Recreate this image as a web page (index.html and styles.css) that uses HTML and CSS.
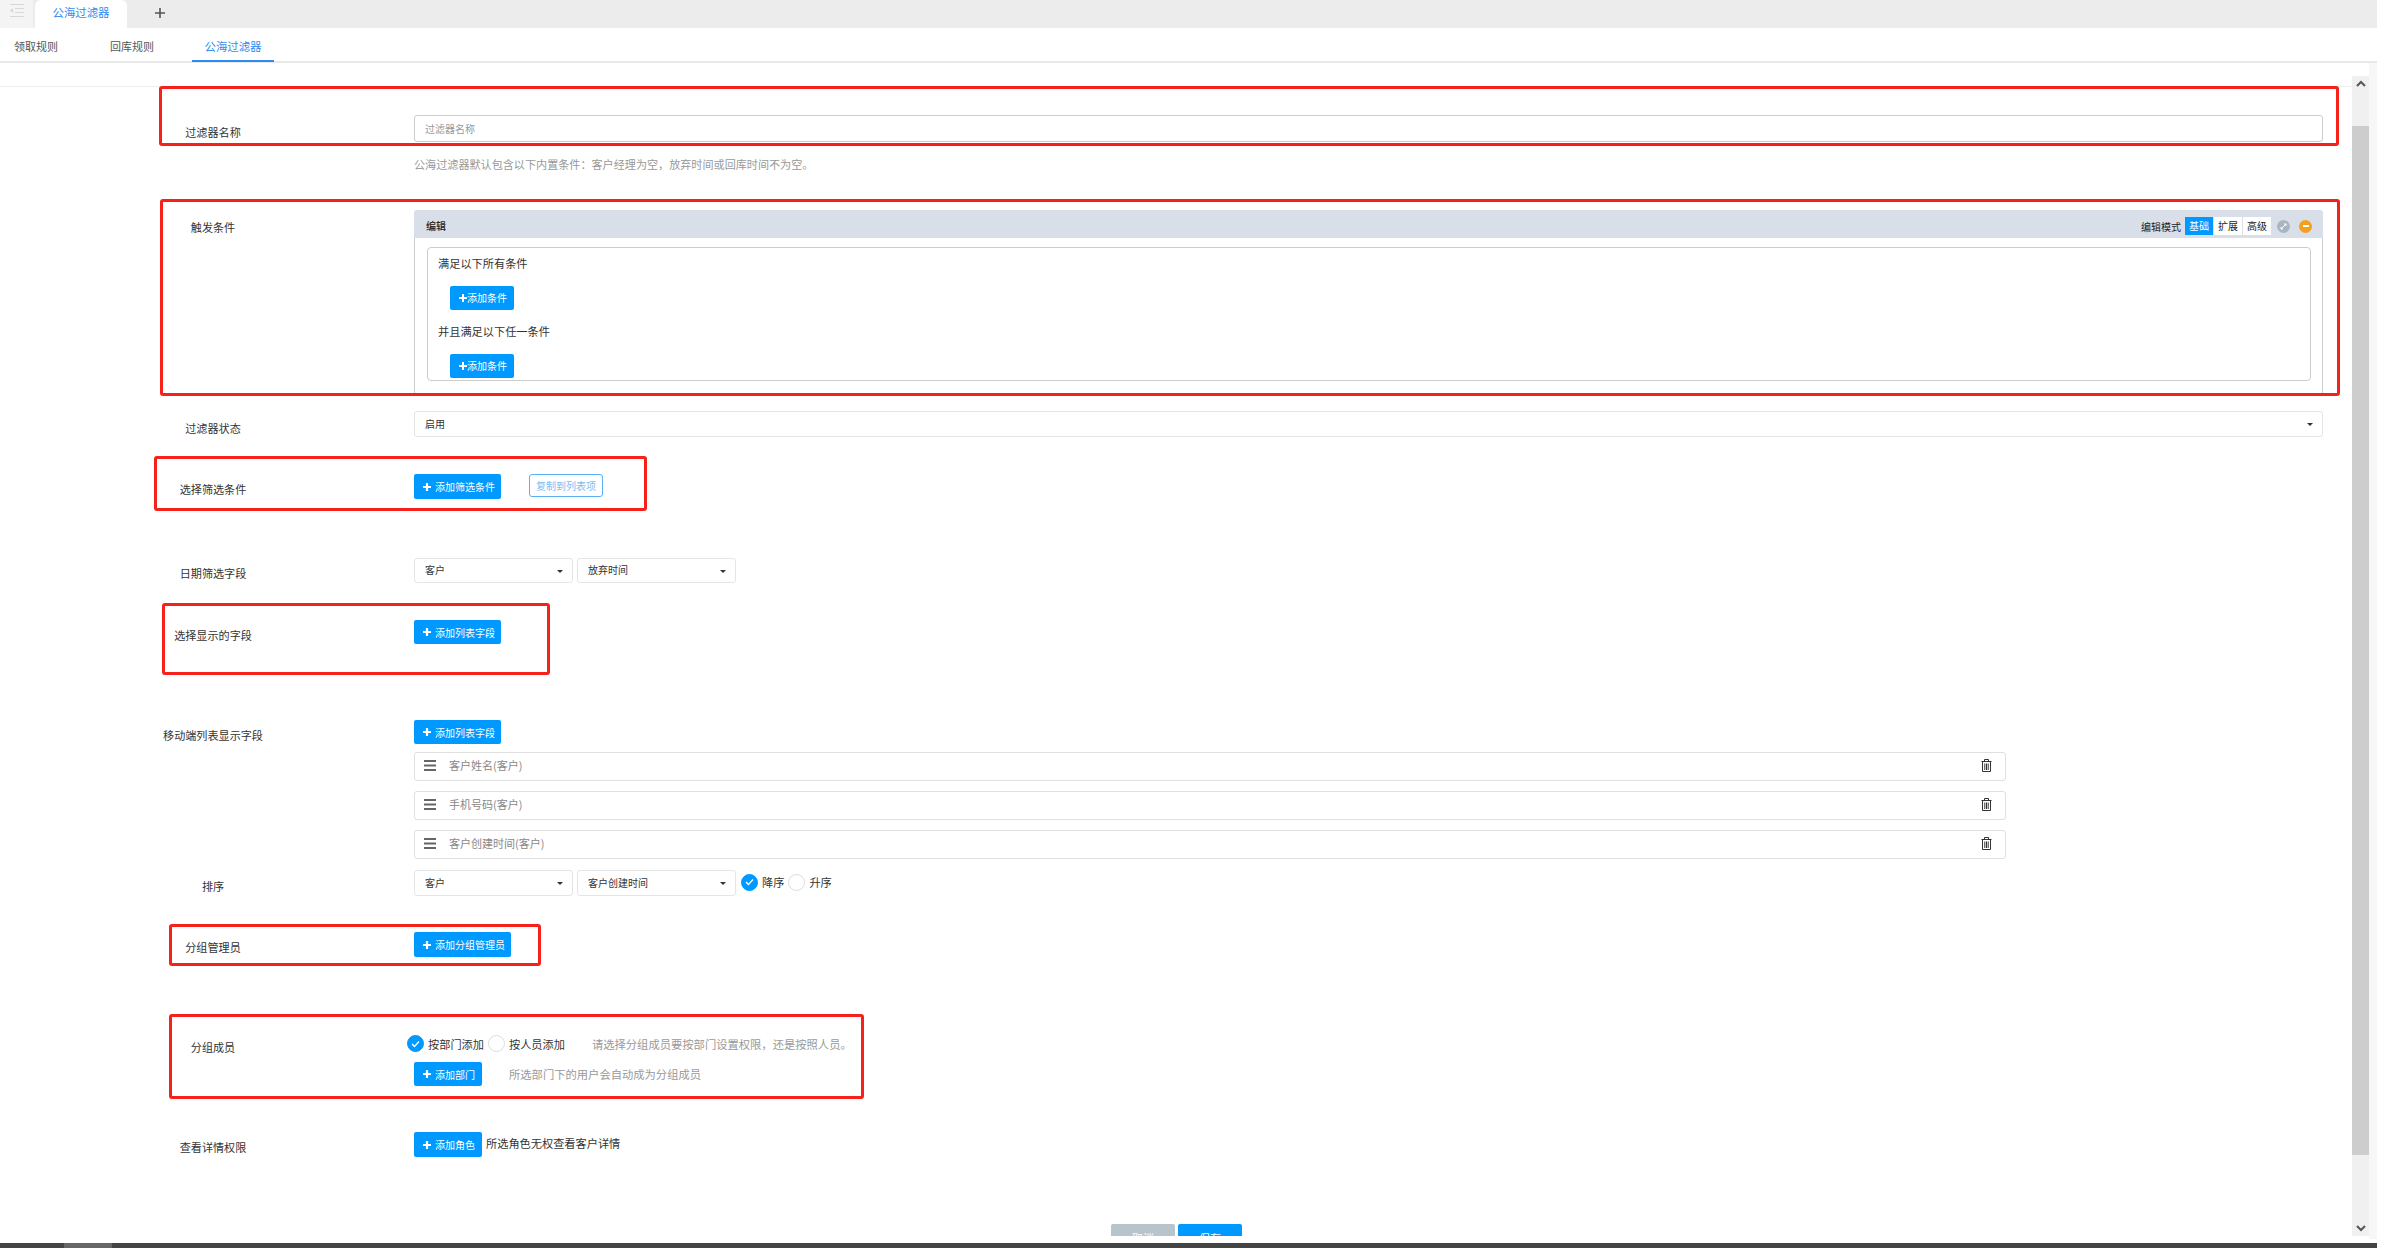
FILE: index.html
```html
<!DOCTYPE html>
<html lang="zh-CN">
<head>
<meta charset="utf-8">
<title>公海过滤器</title>
<link rel="stylesheet" href="styles.css">
</head>
<body>
<div class="app">
  <div class="topbar">
    <div class="menu-cell">
      <svg class="menu-icon" width="14" height="13" viewBox="0 0 14 13"><path d="M0 .5h14M5 4.500h9M5 8.500h9M0 12.500h14" stroke="#d8d8d8" fill="none"/><path d="M3 4v5L0 6.500z" fill="#d8d8d8"/></svg>
    </div>
    <div class="top-tab">公海过滤器</div>
    <div class="top-plus">
      <svg width="10" height="10" viewBox="0 0 10 10"><path d="M5 0v10M0 5h10" stroke="#555" stroke-width="1.600" fill="none"/></svg>
    </div>
  </div>
  <div class="subtabs">
    <div class="subtab">领取规则</div>
    <div class="subtab">回库规则</div>
    <div class="subtab subtab-active">公海过滤器</div>
  </div>
  <div class="main">
    <div class="scroller">
      <div class="form">
        <div class="row row-name">
          <div class="row-label low">过滤器名称</div>
          <div class="row-body">
            <div class="input"><span class="placeholder">过滤器名称</span></div>
            <div class="hint hint-name">公海过滤器默认包含以下内置条件：客户经理为空，放弃时间或回库时间不为空。</div>
          </div>
        </div>
        <div class="row row-trigger">
          <div class="row-label low">触发条件</div>
          <div class="row-body">
            <div class="panel">
              <div class="panel-head">
                <span class="panel-title">编辑</span>
                <div class="panel-tools">
                  <span class="mode-label">编辑模式</span>
                  <span class="mode mode-on">基础</span>
                  <span class="mode">扩展</span>
                  <span class="mode">高级</span>
                  <span class="round round-grey">
                    <svg width="7" height="7" viewBox="0 0 7 7"><path d="M1 6l5-5M4 1h2v2M1 4v2h2" stroke="#fff" fill="none"/></svg>
                  </span>
                  <span class="round round-orange"><span class="minus"></span></span>
                </div>
              </div>
              <div class="panel-body">
                <div class="rule-box">
                  <div class="rule-title">满足以下所有条件</div>
                  <button class="btn btn-cond"><svg class="plus-tight" width="8" height="8" viewBox="0 0 8 8"><path d="M4 0v8M0 4h8" stroke="#fff" stroke-width="2"/></svg>添加条件</button>
                  <div class="rule-title rule-second">并且满足以下任一条件</div>
                  <button class="btn btn-cond"><svg class="plus-tight" width="8" height="8" viewBox="0 0 8 8"><path d="M4 0v8M0 4h8" stroke="#fff" stroke-width="2"/></svg>添加条件</button>
                </div>
              </div>
            </div>
          </div>
        </div>
        <div class="row row-status">
          <div class="row-label low">过滤器状态</div>
          <div class="row-body">
            <div class="select select-full"><span>启用</span><i class="caret"></i></div>
          </div>
        </div>
        <div class="row row-filter">
          <div class="row-label">选择筛选条件</div>
          <div class="row-body row-inline">
            <button class="btn btn-add btn-w87"><svg class="plus" width="8" height="8" viewBox="0 0 8 8"><path d="M4 0v8M0 4h8" stroke="#fff" stroke-width="2.200"/></svg>添加筛选条件</button>
            <button class="btn-outline">复制到列表项</button>
          </div>
        </div>
        <div class="row row-date">
          <div class="row-label">日期筛选字段</div>
          <div class="row-body row-inline row-gap4">
            <div class="select select-half"><span>客户</span><i class="caret"></i></div>
            <div class="select select-half"><span>放弃时间</span><i class="caret"></i></div>
          </div>
        </div>
        <div class="row row-show">
          <div class="row-label">选择显示的字段</div>
          <div class="row-body">
            <button class="btn btn-add btn-w87 btn-h24"><svg class="plus" width="8" height="8" viewBox="0 0 8 8"><path d="M4 0v8M0 4h8" stroke="#fff" stroke-width="2.200"/></svg>添加列表字段</button>
          </div>
        </div>
        <div class="row row-mobile">
          <div class="row-label">移动端列表显示字段</div>
          <div class="row-body">
            <button class="btn btn-add btn-w87 btn-h24"><svg class="plus" width="8" height="8" viewBox="0 0 8 8"><path d="M4 0v8M0 4h8" stroke="#fff" stroke-width="2.200"/></svg>添加列表字段</button>
            <div class="field-list">
              <div class="field">
                <svg class="bars" width="12" height="11" viewBox="0 0 12 11"><path d="M0 1h12M0 5.500h12M0 10h12" stroke="#666" stroke-width="2"/></svg>
                <span class="field-text">客户姓名(客户)</span>
                <svg class="trash" width="11" height="13" viewBox="0 0 11 13"><path d="M.5 2.500h10M1.500 2.500v10h8v-10M3.500 2.500V.5h4v2M3.800 4.500v6.500M5.500 4.500v6.500M7.200 4.500v6.500" stroke="#333" fill="none"/></svg>
              </div>
              <div class="field">
                <svg class="bars" width="12" height="11" viewBox="0 0 12 11"><path d="M0 1h12M0 5.500h12M0 10h12" stroke="#666" stroke-width="2"/></svg>
                <span class="field-text">手机号码(客户)</span>
                <svg class="trash" width="11" height="13" viewBox="0 0 11 13"><path d="M.5 2.500h10M1.500 2.500v10h8v-10M3.500 2.500V.5h4v2M3.800 4.500v6.500M5.500 4.500v6.500M7.200 4.500v6.500" stroke="#333" fill="none"/></svg>
              </div>
              <div class="field">
                <svg class="bars" width="12" height="11" viewBox="0 0 12 11"><path d="M0 1h12M0 5.500h12M0 10h12" stroke="#666" stroke-width="2"/></svg>
                <span class="field-text">客户创建时间(客户)</span>
                <svg class="trash" width="11" height="13" viewBox="0 0 11 13"><path d="M.5 2.500h10M1.500 2.500v10h8v-10M3.500 2.500V.5h4v2M3.800 4.500v6.500M5.500 4.500v6.500M7.200 4.500v6.500" stroke="#333" fill="none"/></svg>
              </div>
            </div>
          </div>
        </div>
        <div class="row row-sort">
          <div class="row-label mid">排序</div>
          <div class="row-body row-inline row-gap4 row-center">
            <div class="select select-half select-h26"><span>客户</span><i class="caret"></i></div>
            <div class="select select-half select-h26"><span>客户创建时间</span><i class="caret"></i></div>
            <span class="radio radio-on"><svg width="9" height="8" viewBox="0 0 9 8"><path d="M1 4l2.500 2.500L8 1.500" stroke="#fff" stroke-width="1.300" fill="none"/></svg></span>
            <span class="radio-text">降序</span>
            <span class="radio"></span>
            <span class="radio-text">升序</span>
          </div>
        </div>
        <div class="row row-admin">
          <div class="row-label">分组管理员</div>
          <div class="row-body">
            <button class="btn btn-add btn-w97"><svg class="plus" width="8" height="8" viewBox="0 0 8 8"><path d="M4 0v8M0 4h8" stroke="#fff" stroke-width="2.200"/></svg>添加分组管理员</button>
          </div>
        </div>
        <div class="row row-members">
          <div class="row-label top">分组成员</div>
          <div class="row-body">
            <div class="radio-line">
              <span class="radio radio-on"><svg width="9" height="8" viewBox="0 0 9 8"><path d="M1 4l2.500 2.500L8 1.500" stroke="#fff" stroke-width="1.300" fill="none"/></svg></span>
              <span class="radio-text">按部门添加</span>
              <span class="radio"></span>
              <span class="radio-text">按人员添加</span>
              <span class="hint hint-radio">请选择分组成员要按部门设置权限，还是按照人员。</span>
            </div>
            <div class="dept-line">
              <button class="btn btn-add btn-w68 btn-h24"><svg class="plus" width="8" height="8" viewBox="0 0 8 8"><path d="M4 0v8M0 4h8" stroke="#fff" stroke-width="2.200"/></svg>添加部门</button>
              <span class="hint hint-dept">所选部门下的用户会自动成为分组成员</span>
            </div>
          </div>
        </div>
        <div class="row row-view">
          <div class="row-label">查看详情权限</div>
          <div class="row-body row-inline">
            <button class="btn btn-add btn-w68"><svg class="plus" width="8" height="8" viewBox="0 0 8 8"><path d="M4 0v8M0 4h8" stroke="#fff" stroke-width="2.200"/></svg>添加角色</button>
            <span class="view-note">所选角色无权查看客户详情</span>
          </div>
        </div>
        <div class="footer">
          <button class="foot-btn foot-cancel">取消</button>
          <button class="foot-btn foot-save">保存</button>
        </div>
      </div>
    </div>
    <div class="scrollbar">
      <div class="sb-end">
        <svg width="10" height="7" viewBox="0 0 10 7"><path d="M1 6l4-4 4 4" stroke="#555" stroke-width="2" fill="none"/></svg>
      </div>
      <div class="sb-thumb"></div>
      <div class="sb-end sb-end-down">
        <svg width="10" height="7" viewBox="0 0 10 7"><path d="M1 1l4 4 4-4" stroke="#555" stroke-width="2" fill="none"/></svg>
      </div>
    </div>
    <div class="gutter"></div>
  </div>
  <div class="bottombar"><div class="bottom-seg"></div></div>

  <div class="frame frame-1"></div>
  <div class="frame frame-2"></div>
  <div class="frame frame-3"></div>
  <div class="frame frame-4"></div>
  <div class="frame frame-5"></div>
  <div class="frame frame-6"></div>
</div>
</body>
</html>
```

FILE: styles.css
```css
* { box-sizing: border-box; }
html, body { margin: 0; padding: 0; background: #fff; }
body {
  width: 2404px;
  height: 1248px;
  overflow: hidden;
  font-family: "Noto Sans CJK SC", "Noto Sans", sans-serif;
  font-size: 11px;
  color: #333;
}
button { font-family: inherit; margin: 0; cursor: pointer; }

.app { position: relative; width: 2377px; height: 1248px; }

/* top window tabs */
.topbar { display: flex; height: 28px; background: #ececec; }
.menu-cell { width: 33px; background: #f4f4f4; padding: 4px 0 0 10px; }
.menu-icon { display: block; }
.top-tab {
  width: 92px;
  margin-left: 2px;
  background: #fff;
  border-radius: 6px 6px 0 0;
  color: #2d8cf0;
  font-size: 11.4px;
  line-height: 24px;
  text-align: center;
}
.top-plus { padding: 8px 0 0 28px; }
.top-plus svg { display: block; }

/* sub tabs */
.subtabs {
  display: flex;
  height: 35px;
  border-bottom: 2px solid #e8e8e8;
}
.subtab {
  width: 82px;
  height: 34px;
  margin-right: 14px;
  line-height: 36px;
  text-align: center;
  font-size: 11px;
  color: #555;
}
.subtab:first-child { width: 72px; margin-right: 19px; }
.subtab:nth-child(2) { margin-right: 19px; }
.subtab-active {
  color: #2d8cf0;
  border-bottom: 2px solid #2d8cf0;
  font-size: 11.4px;
}

/* main area */
.main { display: flex; height: 1180px; }
.scroller { flex: 1; height: 1173px; overflow: hidden; }
.form { padding-top: 23px; }
.form::before {
  content: "";
  display: block;
  height: 1px;
  background: #eeeeee;
}
.scrollbar {
  display: flex;
  flex-direction: column;
  width: 17px;
  height: 1160px;
  margin-top: 13px;
  background: #f0f0f0;
}
.sb-end { height: 50px; padding-top: 4px; }
.sb-end svg { display: block; margin: 0 auto; }
.sb-end-down { height: 81px; padding-top: 70px; }
.sb-thumb { height: 1029px; background: #cdcdcd; }
.gutter { width: 8px; height: 1176px; background: #f7f7f7; }
.bottombar { height: 5px; background: #444; }
.bottom-seg { width: 48px; height: 5px; margin-left: 64px; background: #666; }

/* form rows */
.row { display: flex; align-items: flex-start; }
.row-label {
  flex: none;
  width: 414px;
  padding: 7px 0 0 12px;
  text-align: center;
  line-height: 16px;
  font-size: 11.1px;
  color: #333;
}
.row-label.low { padding-top: 9px; }
.row-label.mid { padding-top: 8px; }
.row-label.top { padding-top: 3px; }
.row-body { flex: none; }
.row-inline { display: flex; align-items: flex-start; }
.row-gap4 { gap: 4px; }
.row-center { align-items: center; }

.row-name { margin-top: 28px; }
.row-trigger { margin-top: 37px; }
.row-status { margin-top: 18px; }
.row-filter { margin-top: 37px; }
.row-date { margin-top: 59px; }
.row-show { margin-top: 37px; }
.row-mobile { margin-top: 76px; }
.row-sort { margin-top: 11px; }
.row-admin { margin-top: 36px; }
.row-members { margin-top: 79px; }
.row-view { margin-top: 46px; }

/* controls */
.input {
  width: 1909px;
  height: 27px;
  border: 1px solid #ccc;
  border-radius: 3px;
  padding-left: 10px;
  line-height: 25px;
}
.placeholder { font-size: 10px; color: #999; }
.hint { color: #999; font-size: 11.3px; line-height: 16px; }
.hint-name { margin: 14px 0 1px; font-size: 11.1px; }

.panel { width: 1909px; }
.panel-head {
  display: flex;
  align-items: center;
  justify-content: space-between;
  height: 28px;
  padding: 0 11px 0 12px;
  background: #d9dfe8;
  border-radius: 3px 3px 0 0;
  font-size: 10px;
  color: #222;
}
.panel-title { margin-top: 2px; font-weight: 500; }
.panel-tools { display: flex; align-items: center; margin-top: 4px; }
.mode-label { margin-right: 4px; }
.mode {
  width: 28px;
  height: 18px;
  margin-right: 1px;
  background: #fff;
  line-height: 18px;
  text-align: center;
}
.mode-on { background: #0099ff; color: #fff; }
.round {
  display: flex;
  align-items: center;
  justify-content: center;
  width: 13px;
  height: 13px;
  border-radius: 50%;
}
.round-grey { margin-left: 5px; background: #a9b6c2; }
.round-orange { margin-left: 9px; background: #f5a01c; }
.minus { width: 6px; height: 2px; background: #fff; }
.panel-body {
  height: 155px;
  padding: 9px 11px 0 12px;
  border: 1px solid #ccc;
  border-top: 0;
  border-bottom: 0;
}
.rule-box {
  height: 134px;
  padding: 6px 10px 0;
  border: 1px solid #ccc;
  border-radius: 4px;
}
.rule-title { font-size: 11.2px; line-height: 18px; color: #333; }
.rule-second { margin-top: 12px; }

.btn {
  display: block;
  border: 0;
  border-radius: 2px;
  background: #0099ff;
  color: #fff;
  font-size: 10px;
  text-align: left;
}
.btn-cond {
  display: flex;
  align-items: center;
  width: 64px;
  height: 24px;
  margin: 14px 0 0 12px;
  padding: 0 0 1px 9px;
}
.plus-tight { flex: none; }
.btn-add {
  display: flex;
  align-items: center;
  height: 25px;
  padding: 0 0 0 9px;
}
.btn-h24 { height: 24px; }
.btn-w87 { width: 87px; }
.btn-w97 { width: 97px; }
.btn-w68 { width: 68px; }
.plus { flex: none; margin-right: 4px; }
.btn-outline {
  width: 74px;
  height: 23px;
  margin-left: 28px;
  padding: 0;
  border: 1px solid #5ab1f5;
  border-radius: 3px;
  background: #fff;
  color: #78bdf3;
  font-size: 10px;
}

.select {
  position: relative;
  display: flex;
  align-items: center;
  padding: 0 0 2px 10px;
  border: 1px solid #e5e5e5;
  border-radius: 3px;
  background: #fff;
  font-size: 10px;
  color: #333;
}
.select-full { width: 1909px; height: 26px; }
.select-half { width: 159px; height: 25px; }
.select-h26 { height: 26px; }
.caret {
  position: absolute;
  right: 9px;
  top: 50%;
  margin-top: -1px;
  border-style: solid;
  border-width: 3px 3px 0;
  border-color: #333 transparent transparent;
}

.field-list { margin-top: 8px; }
.field {
  display: flex;
  align-items: center;
  width: 1592px;
  height: 29px;
  margin-bottom: 10px;
  padding: 0 13px 3px 9px;
  border: 1px solid #e0e0e0;
  border-radius: 3px;
}
.field:last-child { margin-bottom: 0; }
.bars { flex: none; margin-right: 13px; }
.field-text { flex: 1; color: #888; font-size: 11px; }
.trash { flex: none; }

.radio {
  flex: none;
  display: inline-flex;
  align-items: center;
  justify-content: center;
  width: 17px;
  height: 17px;
  border: 1px solid #ddd;
  border-radius: 50%;
  background: #fff;
}
.radio-on { border-color: #0099ff; background: #0099ff; }
.radio-text { font-size: 11.2px; color: #333; line-height: 16px; }
.row-center .radio, .row-center .radio-text { margin-bottom: 2px; }
.row-sort .radio-on { margin-left: 1px; }

.radio-line {
  display: flex;
  align-items: center;
  gap: 4px;
  height: 17px;
  margin-left: -7px;
  margin-top: -1px;
}
.hint-radio { margin-left: 23px; }
.dept-line {
  display: flex;
  align-items: center;
  margin-top: 10px;
}
.hint-dept { margin-left: 27px; }
.view-note { margin-left: 4px; font-size: 11.2px; line-height: 22px; color: #333; }

.footer {
  display: flex;
  gap: 3px;
  margin: 67px 0 0 1111px;
}
.foot-btn {
  width: 64px;
  height: 28px;
  padding: 0;
  border: 0;
  border-radius: 2px 2px 0 0;
  color: #fff;
  font-size: 11px;
}
.foot-cancel { background: #b8c4cc; }
.foot-save { background: #0099ff; }

/* red annotation frames drawn over the form */
.frame {
  position: absolute;
  border: 3px solid #f5211a;
  border-radius: 3px;
  pointer-events: none;
}
.frame-1 { left: 159px; top: 86px; width: 2180px; height: 60px; }
.frame-2 { left: 160px; top: 199px; width: 2180px; height: 197px; }
.frame-3 { left: 154px; top: 456px; width: 493px; height: 55px; }
.frame-4 { left: 162px; top: 603px; width: 388px; height: 72px; }
.frame-5 { left: 169px; top: 924px; width: 372px; height: 42px; }
.frame-6 { left: 169px; top: 1014px; width: 695px; height: 85px; }
```
